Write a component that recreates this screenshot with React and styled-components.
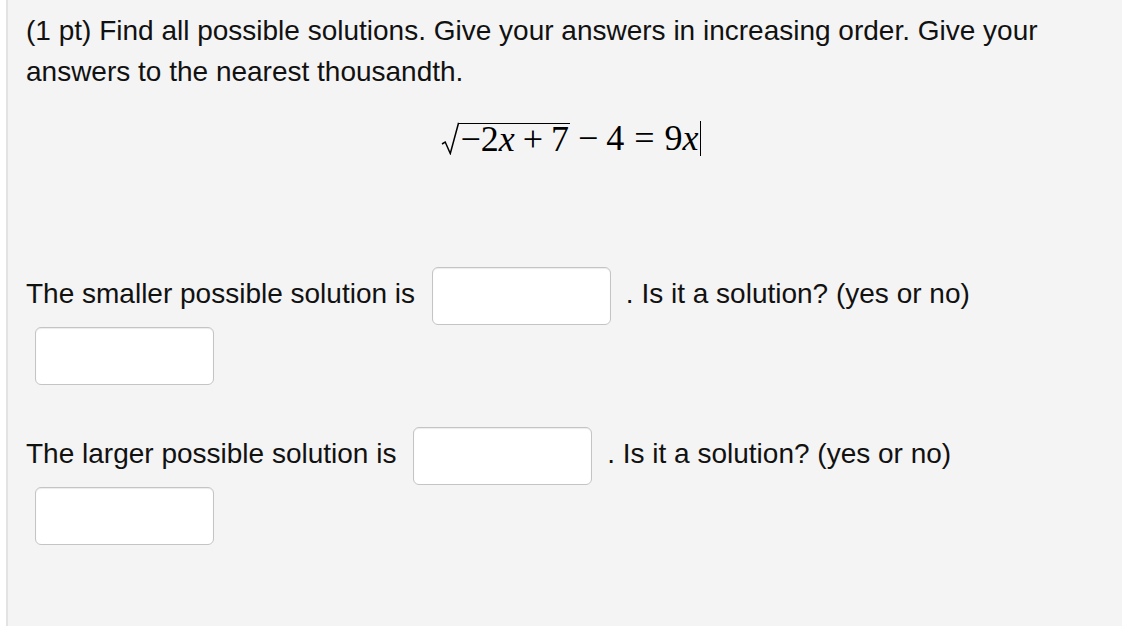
import React from "react";
import styled, { createGlobalStyle } from "styled-components";

const GlobalStyle = createGlobalStyle`
  html, body {
    margin: 0;
    padding: 0;
    background: #ffffff;
  }
`;

const Page = styled.div`
  margin-left: 6px;
  border-left: 2px solid #e3e3e3;
  background: #f4f4f4;
  min-height: 626px;
  box-sizing: border-box;
  padding: 10px 6px 0 18px;
  font-family: "Liberation Sans", Arial, Helvetica, sans-serif;
  color: #111;
`;

const Prompt = styled.p`
  margin: 0;
  font-size: 28px;
  line-height: 41px;
`;

const Equation = styled.div`
  margin: 22px 0 102px;
  height: 48px;
  display: flex;
  align-items: center;
  justify-content: center;
  font-family: "Liberation Serif", "Times New Roman", serif;
  font-size: 36px;
  color: #000;
`;

const Sqrt = styled.span`
  display: inline-flex;
  align-items: flex-end;
`;

const Radicand = styled.span`
  border-top: 1.5px solid #000;
  padding: 0 1px 0 2px;
  line-height: 31px;
  margin-left: -1px;
`;

const Var = styled.i`
  font-style: italic;
`;

const Op = styled.span`
  margin: 0 ${(p) => p.space}em;
`;

const Cursor = styled.span`
  display: inline-block;
  width: 0;
  height: 35px;
  border-left: 1.5px solid #000;
  margin-left: 1px;
`;

const Answer = styled.p`
  margin: 0 0 39px;
  font-size: 28px;
  line-height: 60px;
`;

const Blank = styled.input`
  box-sizing: border-box;
  width: 179px;
  height: 58px;
  margin: 0 15px 0 9px;
  padding: 4px 10px;
  vertical-align: middle;
  background: #fff;
  border: 1px solid #c4c4c4;
  border-radius: 6px;
  box-shadow: inset 0 1px 1px rgba(0, 0, 0, 0.08);
  font-family: "Liberation Sans", Arial, sans-serif;
  font-size: 24px;
  outline: none;
`;

const RadicalSign = () => (
  <svg width="18" height="33" viewBox="0 0 18 33" style={{ display: "block" }}>
    <path
      d="M1 22 L4.2 20 L9.3 31.5 L17.6 0.8"
      fill="none"
      stroke="#000"
      strokeWidth="1.5"
      strokeLinejoin="miter"
    />
  </svg>
);

export default function App() {
  return (
    <>
      <GlobalStyle />
      <Page>
        <Prompt>
          (1 pt) Find all possible solutions. Give your answers in increasing
          order. Give your answers to the nearest thousandth.
        </Prompt>
        <Equation>
          <Sqrt>
            <RadicalSign />
            <Radicand>
              −2<Var>x</Var>
              <Op space={0.222}>+</Op>7
            </Radicand>
          </Sqrt>
          <Op space={0.222}>−</Op>4<Op space={0.278}>=</Op>9<Var>x</Var>
          <Cursor />
        </Equation>
        <Answer>
          The smaller possible solution is <Blank type="text" />. Is it a
          solution? (yes or no)
          <br />
          <Blank type="text" />
        </Answer>
        <Answer>
          The larger possible solution is <Blank type="text" />. Is it a
          solution? (yes or no)
          <br />
          <Blank type="text" />
        </Answer>
      </Page>
    </>
  );
}
